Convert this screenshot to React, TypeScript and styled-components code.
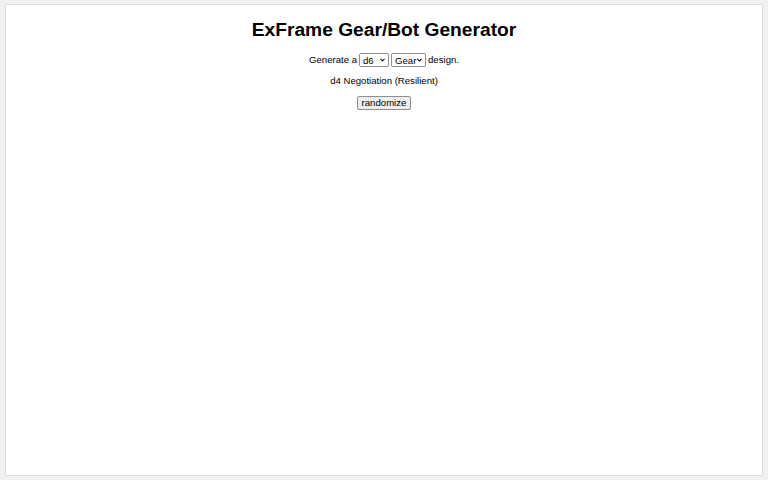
import React, { useState } from 'react';
import styled, { createGlobalStyle } from 'styled-components';

const GlobalStyle = createGlobalStyle`
  html, body {
    margin: 0;
    padding: 0;
    background: #f1f1f1;
    font-family: "Liberation Sans", Arial, sans-serif;
  }
  #root {
    padding: 4px 5px;
    box-sizing: border-box;
    height: 480px;
  }
`;

const Page = styled.div`
  height: 472px;
  box-sizing: border-box;
  background: #fff;
  border: 1px solid #dcdcdc;
  display: flex;
  flex-direction: column;
  align-items: center;
  color: #000;
`;

const Title = styled.h1`
  margin: 14px 0 0;
  font-size: 19.2px;
  font-weight: bold;
  line-height: 22px;
`;

const Line = styled.div<{ $top: number }>`
  margin: ${(p) => p.$top}px 0 0;
  font-size: 9.6px;
  line-height: 12px;
  display: flex;
  align-items: center;
  gap: 2px;
`;

const SelectWrap = styled.span`
  position: relative;
  display: inline-flex;
`;

const Picker = styled.select<{ $w: number }>`
  appearance: none;
  -webkit-appearance: none;
  width: ${(p) => p.$w}px;
  height: 14px;
  box-sizing: border-box;
  font: 9.6px "Liberation Sans", Arial, sans-serif;
  padding: 0 0 0 3px;
  border: 1px solid #8f8f8f;
  border-radius: 2px;
  background: #fff;
  color: #000;
  outline: none;
`;

const Chevron = styled.svg`
  position: absolute;
  right: 4px;
  top: 5px;
  width: 5px;
  height: 4px;
  pointer-events: none;
`;

const Button = styled.button`
  margin-top: 9px;
  height: 14px;
  box-sizing: border-box;
  padding: 0 4px;
  font: 9.6px "Liberation Sans", Arial, sans-serif;
  line-height: 12px;
  background: #efefef;
  border: 1px solid #8f8f8f;
  border-radius: 2px;
  color: #000;
`;

const dice = ['d4', 'd6', 'd8', 'd10', 'd12'];
const kinds = ['Gear', 'Bot'];
const results = ['d4 Negotiation (Resilient)', 'd6 Combat (Sturdy)', 'd8 Stealth (Quiet)'];

function Dropdown({
  width,
  value,
  options,
  onChange,
}: {
  width: number;
  value: string;
  options: string[];
  onChange: (v: string) => void;
}) {
  return (
    <SelectWrap>
      <Picker $w={width} value={value} onChange={(e) => onChange(e.target.value)}>
        {options.map((o) => (
          <option key={o}>{o}</option>
        ))}
      </Picker>
      <Chevron viewBox="0 0 5 4">
        <path d="M0.5 0.8 L2.5 3 L4.5 0.8" fill="none" stroke="#000" strokeWidth="1.1" />
      </Chevron>
    </SelectWrap>
  );
}

export default function App() {
  const [die, setDie] = useState('d6');
  const [kind, setKind] = useState('Gear');
  const [result, setResult] = useState(results[0]);

  return (
    <>
      <GlobalStyle />
      <Page>
        <Title>ExFrame Gear/Bot Generator</Title>
        <Line $top={12}>
          Generate a
          <Dropdown width={30} value={die} options={dice} onChange={setDie} />
          <Dropdown width={35} value={kind} options={kinds} onChange={setKind} />
          design.
        </Line>
        <Line $top={8}>{result}</Line>
        <Button onClick={() => setResult(results[Math.floor(Math.random() * results.length)])}>
          randomize
        </Button>
      </Page>
    </>
  );
}
